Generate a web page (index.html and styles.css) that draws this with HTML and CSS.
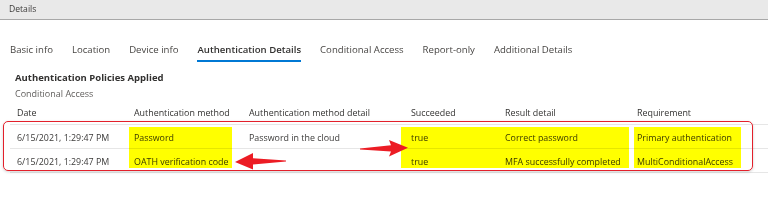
FILE: index.html
```html
<!DOCTYPE html>
<html lang="en">
<head>
<meta charset="utf-8">
<title>Details</title>
<link rel="stylesheet" href="styles.css">
</head>
<body>
<div class="page">
  <header class="titlebar">Details</header>
  <nav class="tabs">
    <span class="tab">Basic info</span>
    <span class="tab">Location</span>
    <span class="tab">Device info</span>
    <span class="tab active">Authentication Details</span>
    <span class="tab">Conditional Access</span>
    <span class="tab">Report-only</span>
    <span class="tab">Additional Details</span>
  </nav>
  <section class="content">
    <h2 class="title">Authentication Policies Applied</h2>
    <div class="subtitle">Conditional Access</div>
    <div class="table">
      <div class="row head">
        <div class="cell">Date</div>
        <div class="cell">Authentication method</div>
        <div class="cell">Authentication method detail</div>
        <div class="cell">Succeeded</div>
        <div class="cell">Result detail</div>
        <div class="cell">Requirement</div>
      </div>
      <div class="row">
        <div class="cell">6/15/2021, 1:29:47 PM</div>
        <div class="cell">Password</div>
        <div class="cell">Password in the cloud</div>
        <div class="cell">true</div>
        <div class="cell">Correct password</div>
        <div class="cell">Primary authentication</div>
      </div>
      <div class="row">
        <div class="cell">6/15/2021, 1:29:47 PM</div>
        <div class="cell">OATH verification code</div>
        <div class="cell"></div>
        <div class="cell">true</div>
        <div class="cell">MFA successfully completed</div>
        <div class="cell">MultiConditionalAccess</div>
      </div>
    </div>
  </section>

  <div class="annotations" aria-hidden="true">
    <div class="hl hl-method"></div>
    <div class="hl hl-result"></div>
    <div class="hl hl-req"></div>
    <div class="redbox"></div>
    <svg class="arrows" width="768" height="216" viewBox="0 0 768 216">
      <polygon class="arrow" points="360,148.6 391,145.2 389,140 408,147.8 389,156.5 391,151.4 360,149.4"/>
      <polygon class="arrow" points="286,160.6 253,158.2 253,153 235,162 253,169.5 253,164.6 286,161.4"/>
    </svg>
  </div>
</div>
</body>
</html>
```

FILE: styles.css
```css
html, body {
  margin: 0;
  padding: 0;
  background: #ffffff;
}

.page {
  position: relative;
  width: 768px;
  height: 216px;
  overflow: hidden;
  font-family: "Open Sans", "Noto Sans", sans-serif;
  color: #323130;
  background: #ffffff;
}

.titlebar {
  height: 19px;
  line-height: 19px;
  padding-left: 9px;
  font-size: 8.6px;
  color: #3b3a39;
  background: #e9e9e9;
  border-bottom: 1px solid #a8a8a8;
}

.tabs {
  display: flex;
  gap: 19px;
  margin-top: 22px;
  padding-left: 10px;
}

.tab {
  font-size: 9.6px;
  line-height: 16px;
  padding-bottom: 2px;
  border-bottom: 2px solid transparent;
  color: #484644;
}

.tab.active {
  font-weight: 600;
  color: #323130;
  border-bottom-color: #0078d4;
}

.content {
  padding-left: 15px;
}

.title {
  margin: 8px 0 0 0;
  font-size: 9.5px;
  line-height: 16px;
  font-weight: 700;
  color: #323130;
}

.subtitle {
  margin-top: 1px;
  font-size: 9px;
  line-height: 14px;
  color: #605e5c;
}

.table {
  margin-left: -5px;
}

.row {
  display: grid;
  grid-template-columns: 117px 115px 162px 94px 132px 1fr;
  height: 23px;
  border-bottom: 1px solid #e6e6e6;
  align-items: center;
  font-size: 8.9px;
  color: #3b3a39;
}

.row.head {
  color: #323130;
}

.row:not(.head) .cell {
  padding-top: 2px;
}

.cell {
  padding-left: 7px;
  white-space: nowrap;
}

.annotations {
  position: absolute;
  inset: 0;
  pointer-events: none;
}

.hl {
  position: absolute;
  top: 127px;
  height: 41px;
  background: #ffff00;
  mix-blend-mode: multiply;
}

.hl-method { left: 129px; width: 103px; }
.hl-result { left: 401px; width: 228px; }
.hl-req { left: 634px; width: 107px; }

.redbox {
  position: absolute;
  left: 3px;
  top: 121px;
  width: 748px;
  height: 48px;
  border: 1.5px solid #e3202b;
  border-radius: 5px;
  box-shadow: 0 1px 3px rgba(0, 0, 0, 0.18);
}

.arrows {
  position: absolute;
  left: 0;
  top: 0;
}

.arrow {
  fill: #ec1c24;
}
```
